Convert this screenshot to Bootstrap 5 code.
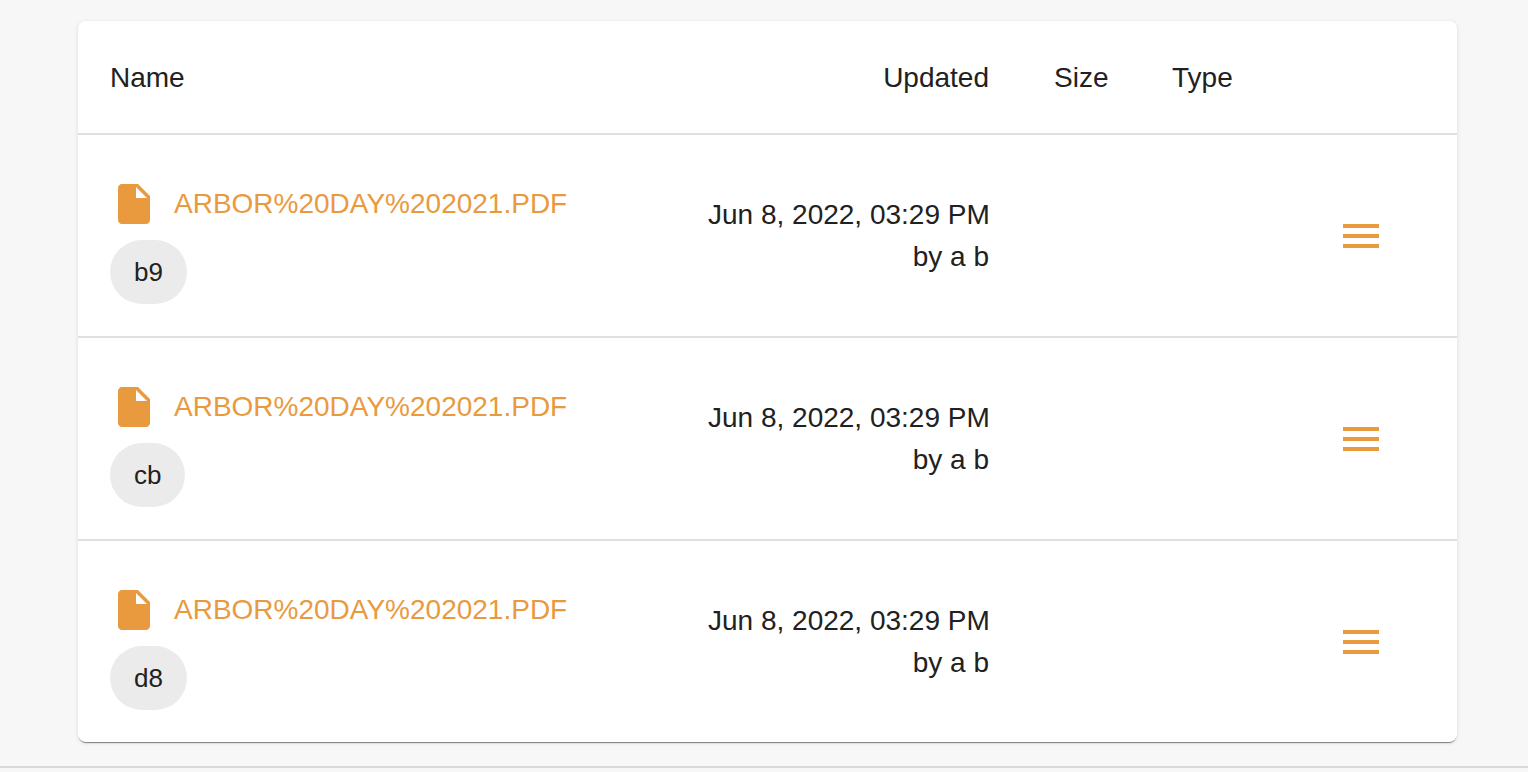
<!DOCTYPE html>
<html lang="en">
<head>
    <meta charset="UTF-8">
    <title>Files</title>
    <link href="https://cdn.jsdelivr.net/npm/bootstrap@5.3.2/dist/css/bootstrap.min.css" rel="stylesheet">
    <style>
        html, body {
            height: 100%;
        }
        body {
            background-color: #f7f7f7;
            color: #212121;
            font-family: "Liberation Sans", Arial, sans-serif;
            font-size: 28px;
            line-height: 42px;
            overflow: hidden;
        }
        .page-wrap {
            height: 768px;
            padding: 21px 71px 0 78px;
            border-bottom: 2px solid #d9d9d9;
        }
        .file-card {
            width: 1379px;
            background: #fff;
            border-radius: 8px;
            overflow: hidden;
            box-shadow: 0 2px 1px -1px rgba(0, 0, 0, .45), 0 1px 4px 0 rgba(0, 0, 0, .12);
        }
        .file-table {
            width: 100%;
            table-layout: fixed;
            margin: 0;
        }
        .file-table th {
            font-weight: 400;
            height: 113px;
            padding: 2px 32px 0;
            border-bottom: 2px solid #e0e0e0;
            vertical-align: middle;
        }
        .file-table td {
            height: 203px;
            padding: 0 32px;
            border-bottom: 2px solid #e0e0e0;
            vertical-align: middle;
            white-space: nowrap;
        }
        .file-table tr:last-child td {
            height: 202px;
            border-bottom: 0;
        }
        .file-table td.name-cell {
            vertical-align: top;
            padding-top: 45px;
        }
        .file-table th.col-size,
        .file-table th.col-type {
            padding-left: 33px;
        }
        .col-name { width: 598px; }
        .col-updated { width: 345px; }
        .col-size { width: 118px; }
        .col-type { width: 124px; }
        .file-link {
            color: #e99a3f;
            text-decoration: none;
            line-height: 48px;
        }
        .file-icon {
            width: 48px;
            height: 48px;
            fill: #e99a3f;
            margin-right: 16px;
            flex-shrink: 0;
        }
        .tag-chip {
            display: inline-block;
            height: 64px;
            padding: 0 24px;
            margin-top: 12px;
            border-radius: 32px;
            background: #ebebeb;
            font-size: 26px;
            line-height: 64px;
        }
        .menu-icon {
            display: block;
            width: 36px;
            height: 24px;
            fill: #e99a3f;
        }
        .menu-btn {
            background: none;
            border: 0;
            margin: 0 0 2px 1px;
        }
    </style>
</head>
<body>

<div class="page-wrap">
    <div class="file-card">
        <table class="file-table">
            <thead>
            <tr>
                <th class="col-name">Name</th>
                <th class="col-updated text-end">Updated</th>
                <th class="col-size">Size</th>
                <th class="col-type">Type</th>
                <th></th>
            </tr>
            </thead>
            <tbody>
            <tr>
                <td class="name-cell">
                    <a class="file-link d-flex align-items-center" href="#">
                        <svg class="file-icon" viewBox="0 0 24 24"><path d="M6 2c-1.1 0-2 .9-2 2v16c0 1.1.9 2 2 2h12c1.1 0 2-.9 2-2V8l-6-6H6zm7 7V3.500L18.500 9H13z"/></svg>
                        <span>ARBOR%20DAY%202021.PDF</span>
                    </a>
                    <span class="tag-chip">b9</span>
                </td>
                <td class="text-end">Jun 8, 2022, 03:29 PM<br>by a b</td>
                <td></td>
                <td></td>
                <td class="text-center p-0">
                    <button class="menu-btn p-0 d-inline-block align-middle" type="button" aria-label="Menu">
                        <svg class="menu-icon" viewBox="0 0 36 24"><rect width="36" height="4"/><rect y="10" width="36" height="4"/><rect y="20" width="36" height="4"/></svg>
                    </button>
                </td>
            </tr>
            <tr>
                <td class="name-cell">
                    <a class="file-link d-flex align-items-center" href="#">
                        <svg class="file-icon" viewBox="0 0 24 24"><path d="M6 2c-1.1 0-2 .9-2 2v16c0 1.1.9 2 2 2h12c1.1 0 2-.9 2-2V8l-6-6H6zm7 7V3.500L18.500 9H13z"/></svg>
                        <span>ARBOR%20DAY%202021.PDF</span>
                    </a>
                    <span class="tag-chip">cb</span>
                </td>
                <td class="text-end">Jun 8, 2022, 03:29 PM<br>by a b</td>
                <td></td>
                <td></td>
                <td class="text-center p-0">
                    <button class="menu-btn p-0 d-inline-block align-middle" type="button" aria-label="Menu">
                        <svg class="menu-icon" viewBox="0 0 36 24"><rect width="36" height="4"/><rect y="10" width="36" height="4"/><rect y="20" width="36" height="4"/></svg>
                    </button>
                </td>
            </tr>
            <tr>
                <td class="name-cell">
                    <a class="file-link d-flex align-items-center" href="#">
                        <svg class="file-icon" viewBox="0 0 24 24"><path d="M6 2c-1.1 0-2 .9-2 2v16c0 1.1.9 2 2 2h12c1.1 0 2-.9 2-2V8l-6-6H6zm7 7V3.500L18.500 9H13z"/></svg>
                        <span>ARBOR%20DAY%202021.PDF</span>
                    </a>
                    <span class="tag-chip">d8</span>
                </td>
                <td class="text-end">Jun 8, 2022, 03:29 PM<br>by a b</td>
                <td></td>
                <td></td>
                <td class="text-center p-0">
                    <button class="menu-btn p-0 d-inline-block align-middle" type="button" aria-label="Menu">
                        <svg class="menu-icon" viewBox="0 0 36 24"><rect width="36" height="4"/><rect y="10" width="36" height="4"/><rect y="20" width="36" height="4"/></svg>
                    </button>
                </td>
            </tr>
            </tbody>
        </table>
    </div>
</div>

<script src="https://cdn.jsdelivr.net/npm/bootstrap@5.3.2/dist/js/bootstrap.bundle.min.js"></script>
</body>
</html>
